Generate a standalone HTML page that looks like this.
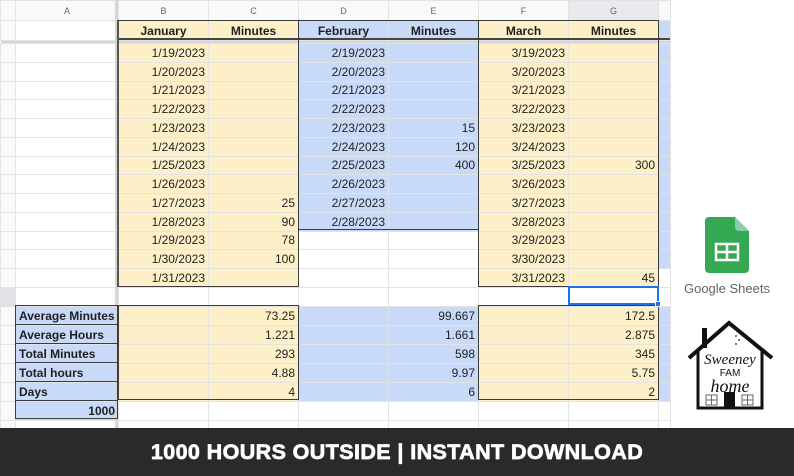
<!DOCTYPE html>
<html><head><meta charset="utf-8">
<style>
*{margin:0;padding:0;box-sizing:border-box}
body{width:794px;height:476px;overflow:hidden;background:#fff;position:relative;font-family:"Liberation Sans",Arial,sans-serif;color:#1f1f1f}
table{position:absolute;left:0;top:0;border-collapse:collapse;table-layout:fixed;width:670px}
td{border:1px solid #e3e3e3;font-size:12px;padding:0 3px;text-align:right;white-space:nowrap;overflow:hidden;line-height:12px}
tr.ch td{height:20px;background:#f8f9fa;color:#666;font-size:9px;text-align:center}
tr.ch td.s{background:#e8eaed}
td.rh{background:#f8f9fa;padding:0}
td.rhs{background:#e1e3e6;padding:0}
tr.h td{height:20px;font-weight:bold;text-align:center}
tr.sp td{height:3px;background:#d6d6d6;border:none}
tr.r td{height:18.75px}
tr.m td{height:19px}
.y{background:#fdf0c8}
.b{background:#c9daf8}
.l{text-align:left;font-weight:bold}
.bx{position:absolute;border:1px solid #3c3c3c}
</style></head><body>
<table>
<colgroup><col style="width:15px"><col style="width:103px"><col style="width:90px"><col style="width:90px"><col style="width:90px"><col style="width:90px"><col style="width:90px"><col style="width:90px"><col style="width:12px"></colgroup>
<tr class="ch"><td></td><td>A</td><td>B</td><td>C</td><td>D</td><td>E</td><td>F</td><td class="s">G</td><td></td></tr>
<tr class="h"><td class="rh"></td><td></td><td class="y">January</td><td class="y">Minutes</td><td class="b">February</td><td class="b">Minutes</td><td class="y">March</td><td class="y">Minutes</td><td class="b"></td></tr>
<tr class="sp"><td></td><td></td><td></td><td></td><td></td><td></td><td></td><td></td><td></td></tr>
<tr class="r"><td class="rh"></td><td></td><td class="y">1/19/2023</td><td class="y"></td><td class="b">2/19/2023</td><td class="b"></td><td class="y">3/19/2023</td><td class="y"></td><td class="b"></td></tr>
<tr class="r"><td class="rh"></td><td></td><td class="y">1/20/2023</td><td class="y"></td><td class="b">2/20/2023</td><td class="b"></td><td class="y">3/20/2023</td><td class="y"></td><td class="b"></td></tr>
<tr class="r"><td class="rh"></td><td></td><td class="y">1/21/2023</td><td class="y"></td><td class="b">2/21/2023</td><td class="b"></td><td class="y">3/21/2023</td><td class="y"></td><td class="b"></td></tr>
<tr class="r"><td class="rh"></td><td></td><td class="y">1/22/2023</td><td class="y"></td><td class="b">2/22/2023</td><td class="b"></td><td class="y">3/22/2023</td><td class="y"></td><td class="b"></td></tr>
<tr class="r"><td class="rh"></td><td></td><td class="y">1/23/2023</td><td class="y"></td><td class="b">2/23/2023</td><td class="b">15</td><td class="y">3/23/2023</td><td class="y"></td><td class="b"></td></tr>
<tr class="r"><td class="rh"></td><td></td><td class="y">1/24/2023</td><td class="y"></td><td class="b">2/24/2023</td><td class="b">120</td><td class="y">3/24/2023</td><td class="y"></td><td class="b"></td></tr>
<tr class="r"><td class="rh"></td><td></td><td class="y">1/25/2023</td><td class="y"></td><td class="b">2/25/2023</td><td class="b">400</td><td class="y">3/25/2023</td><td class="y">300</td><td class="b"></td></tr>
<tr class="r"><td class="rh"></td><td></td><td class="y">1/26/2023</td><td class="y"></td><td class="b">2/26/2023</td><td class="b"></td><td class="y">3/26/2023</td><td class="y"></td><td class="b"></td></tr>
<tr class="r"><td class="rh"></td><td></td><td class="y">1/27/2023</td><td class="y">25</td><td class="b">2/27/2023</td><td class="b"></td><td class="y">3/27/2023</td><td class="y"></td><td class="b"></td></tr>
<tr class="r"><td class="rh"></td><td></td><td class="y">1/28/2023</td><td class="y">90</td><td class="b">2/28/2023</td><td class="b"></td><td class="y">3/28/2023</td><td class="y"></td><td class="b"></td></tr>
<tr class="r"><td class="rh"></td><td></td><td class="y">1/29/2023</td><td class="y">78</td><td></td><td></td><td class="y">3/29/2023</td><td class="y"></td><td class="b"></td></tr>
<tr class="r"><td class="rh"></td><td></td><td class="y">1/30/2023</td><td class="y">100</td><td></td><td></td><td class="y">3/30/2023</td><td class="y"></td><td class="b"></td></tr>
<tr class="r"><td class="rh"></td><td></td><td class="y">1/31/2023</td><td class="y"></td><td></td><td></td><td class="y">3/31/2023</td><td class="y">45</td><td></td></tr>
<tr class="m"><td class="rhs"></td><td></td><td></td><td></td><td></td><td></td><td></td><td></td><td></td></tr>
<tr class="m"><td class="rh"></td><td class="b l">Average Minutes</td><td class="y"></td><td class="y">73.25</td><td class="b"></td><td class="b">99.667</td><td class="y"></td><td class="y">172.5</td><td class="b"></td></tr>
<tr class="m"><td class="rh"></td><td class="b l">Average Hours</td><td class="y"></td><td class="y">1.221</td><td class="b"></td><td class="b">1.661</td><td class="y"></td><td class="y">2.875</td><td class="b"></td></tr>
<tr class="m"><td class="rh"></td><td class="b l">Total Minutes</td><td class="y"></td><td class="y">293</td><td class="b"></td><td class="b">598</td><td class="y"></td><td class="y">345</td><td class="b"></td></tr>
<tr class="m"><td class="rh"></td><td class="b l">Total hours</td><td class="y"></td><td class="y">4.88</td><td class="b"></td><td class="b">9.97</td><td class="y"></td><td class="y">5.75</td><td class="b"></td></tr>
<tr class="m"><td class="rh"></td><td class="b l">Days</td><td class="y"></td><td class="y">4</td><td class="b"></td><td class="b">6</td><td class="y"></td><td class="y">2</td><td class="b"></td></tr>
<tr class="m"><td class="rh"></td><td class="b" style="font-weight:bold">1000</td><td></td><td></td><td></td><td></td><td></td><td></td><td></td></tr>
<tr style="height:12px"><td class="rh"></td><td></td><td></td><td></td><td></td><td></td><td></td><td></td><td></td></tr>
</table>
<div style="position:absolute;left:115px;top:0;width:3px;height:428px;background:#d6d6d6"></div>
<div style="position:absolute;left:118px;top:38px;width:552px;height:2px;background:#444"></div>
<div class="bx" style="left:117px;top:20px;width:182px;height:267px;border-left:2px solid #555"></div>
<div class="bx" style="left:298px;top:20px;width:181px;height:210px"></div>
<div class="bx" style="left:478px;top:20px;width:181px;height:267px"></div>
<div class="bx" style="left:15px;top:305px;width:103px;height:20px"></div>
<div class="bx" style="left:15px;top:324px;width:103px;height:20px"></div>
<div class="bx" style="left:15px;top:343px;width:103px;height:20px"></div>
<div class="bx" style="left:15px;top:362px;width:103px;height:20px"></div>
<div class="bx" style="left:15px;top:381px;width:103px;height:20px"></div>
<div class="bx" style="left:15px;top:400px;width:103px;height:19px"></div>
<div class="bx" style="left:118px;top:305px;width:181px;height:95px"></div>
<div class="bx" style="left:478px;top:305px;width:181px;height:95px"></div>
<div style="position:absolute;left:568px;top:286px;width:91px;height:19px;border:2px solid #1a73e8"></div>
<div style="position:absolute;left:655px;top:301px;width:6px;height:6px;background:#1a73e8;border:1px solid #fff"></div>
<svg style="position:absolute;left:705px;top:217px" width="44" height="56" viewBox="0 0 44 56">
<path d="M4 0H30L44 14V52A4 4 0 0 1 40 56H4A4 4 0 0 1 0 52V4A4 4 0 0 1 4 0Z" fill="#34a853"/>
<path d="M30 0L44 14H34A4 4 0 0 1 30 10Z" fill="#87ceac"/>
<rect x="11" y="27" width="22" height="16" fill="none" stroke="#fff" stroke-width="2.5"/>
<line x1="11" y1="35" x2="33" y2="35" stroke="#fff" stroke-width="2.5"/>
<line x1="22" y1="27" x2="22" y2="43" stroke="#fff" stroke-width="2.5"/>
</svg>
<div style="position:absolute;left:680px;top:281px;width:94px;text-align:center;font-size:13px;color:#5f6368">Google Sheets</div>
<svg style="position:absolute;left:686px;top:320px" width="90" height="92" viewBox="0 0 90 92">
<path d="M3 38L43 3L86 38" fill="none" stroke="#111" stroke-width="4"/>
<rect x="16" y="8" width="5" height="20" fill="#111"/>
<path d="M12 30V88H76V30" fill="none" stroke="#111" stroke-width="3"/>
<text x="44" y="44" text-anchor="middle" font-family="Liberation Serif,serif" font-style="italic" font-size="15" fill="#111">Sweeney</text>
<text x="44" y="56" text-anchor="middle" font-family="Liberation Sans,sans-serif" font-size="10" fill="#111">FAM</text>
<text x="44" y="72" text-anchor="middle" font-family="Liberation Serif,serif" font-style="italic" font-size="18" fill="#111">home</text>
<rect x="38" y="72" width="11" height="16" fill="#111"/>
<rect x="20" y="75" width="11" height="10" fill="none" stroke="#666"/>
<path d="M25.5 75V85M20 80H31" stroke="#666"/>
<rect x="56" y="75" width="11" height="10" fill="none" stroke="#666"/>
<path d="M61.5 75V85M56 80H67" stroke="#666"/>
<circle cx="50" cy="16" r="1" fill="#555"/><circle cx="53" cy="20" r="1" fill="#555"/><circle cx="50" cy="24" r="1" fill="#555"/>
</svg>
<div style="position:absolute;left:0;top:428px;width:794px;height:48px;background:#2a2a2a;color:#fff;font-weight:bold;font-size:21.5px;text-align:center;line-height:48px;letter-spacing:0.4px;-webkit-text-stroke:0.7px #fff">1000 HOURS OUTSIDE | INSTANT DOWNLOAD</div>
</body></html>
